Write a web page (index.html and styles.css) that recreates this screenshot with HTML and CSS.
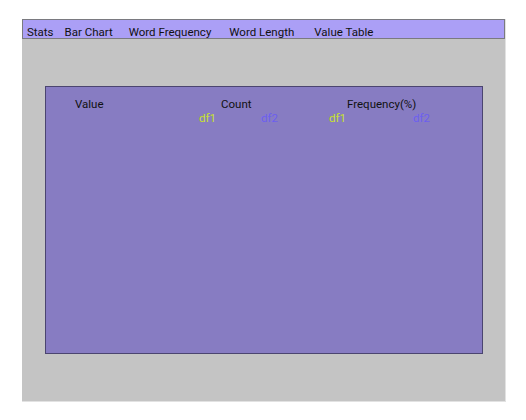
FILE: index.html
```html
<!DOCTYPE html>
<html>
<head>
<meta charset="utf-8">
<link rel="stylesheet" href="styles.css">
</head>
<body>
<div class="app">
  <nav class="tabs">
    <span class="tab tab-stats">Stats</span>
    <span class="tab tab-bar">Bar Chart</span>
    <span class="tab tab-freq">Word Frequency</span>
    <span class="tab tab-len">Word Length</span>
    <span class="tab tab-table">Value Table</span>
  </nav>
  <main class="stage">
    <section class="panel">
      <div class="grid">
        <div class="h h-value">Value</div>
        <div class="h h-count">Count</div>
        <div class="h h-freq">Frequency(%)</div>
        <div class="s s-df1a">df1</div>
        <div class="s s-df2a">df2</div>
        <div class="s s-df1b">df1</div>
        <div class="s s-df2b">df2</div>
      </div>
    </section>
  </main>
</div>
</body>
</html>
```

FILE: styles.css
```css
html, body {
  margin: 0;
  padding: 0;
  background: #ffffff;
}
body {
  font-family: Roboto, "Liberation Sans", sans-serif;
  font-size: 11.5px;
  color: #111111;
}
.app {
  margin: 19px 0 0 22px;
  width: 483px;
  border-right: 1px solid #e2e2e2;
  border-bottom: 1px solid #e2e2e2;
}
.tabs {
  display: flex;
  height: 13px;
  line-height: 14px;
  background: #ab9ff6;
  border: 1px solid #7a7a80;
  padding: 5px 0 0 4px;
  box-sizing: content-box;
}
.tab { white-space: nowrap; }
.tab-bar { margin-left: 11px; }
.tab-freq { margin-left: 16px; }
.tab-len { margin-left: 18px; }
.tab-table { margin-left: 20px; }
.stage {
  background: #c4c4c4;
  height: 362px;
  padding: 47px 22px 0 23px;
  box-sizing: border-box;
}
.panel {
  height: 268px;
  box-sizing: border-box;
  background: #877cc2;
  border: 1px solid #4b4570;
  padding-top: 11px;
}
.grid {
  display: grid;
  grid-template-columns: 29px 124px 22px 40px 68px 18px 66px 1fr;
  grid-auto-rows: 13.5px;
  line-height: 13.5px;
  white-space: nowrap;
}
.h-value { grid-column: 2 / 3; grid-row: 1; }
.h-count { grid-column: 4 / 6; grid-row: 1; }
.h-freq { grid-column: 7 / 9; grid-row: 1; }
.s { grid-row: 2; }
.s-df1a { grid-column: 3 / 5; color: #c8e22c; }
.s-df2a { grid-column: 5 / 6; color: #6c5ff0; }
.s-df1b { grid-column: 6 / 8; color: #c8e22c; }
.s-df2b { grid-column: 8 / 9; color: #6c5ff0; }
```
